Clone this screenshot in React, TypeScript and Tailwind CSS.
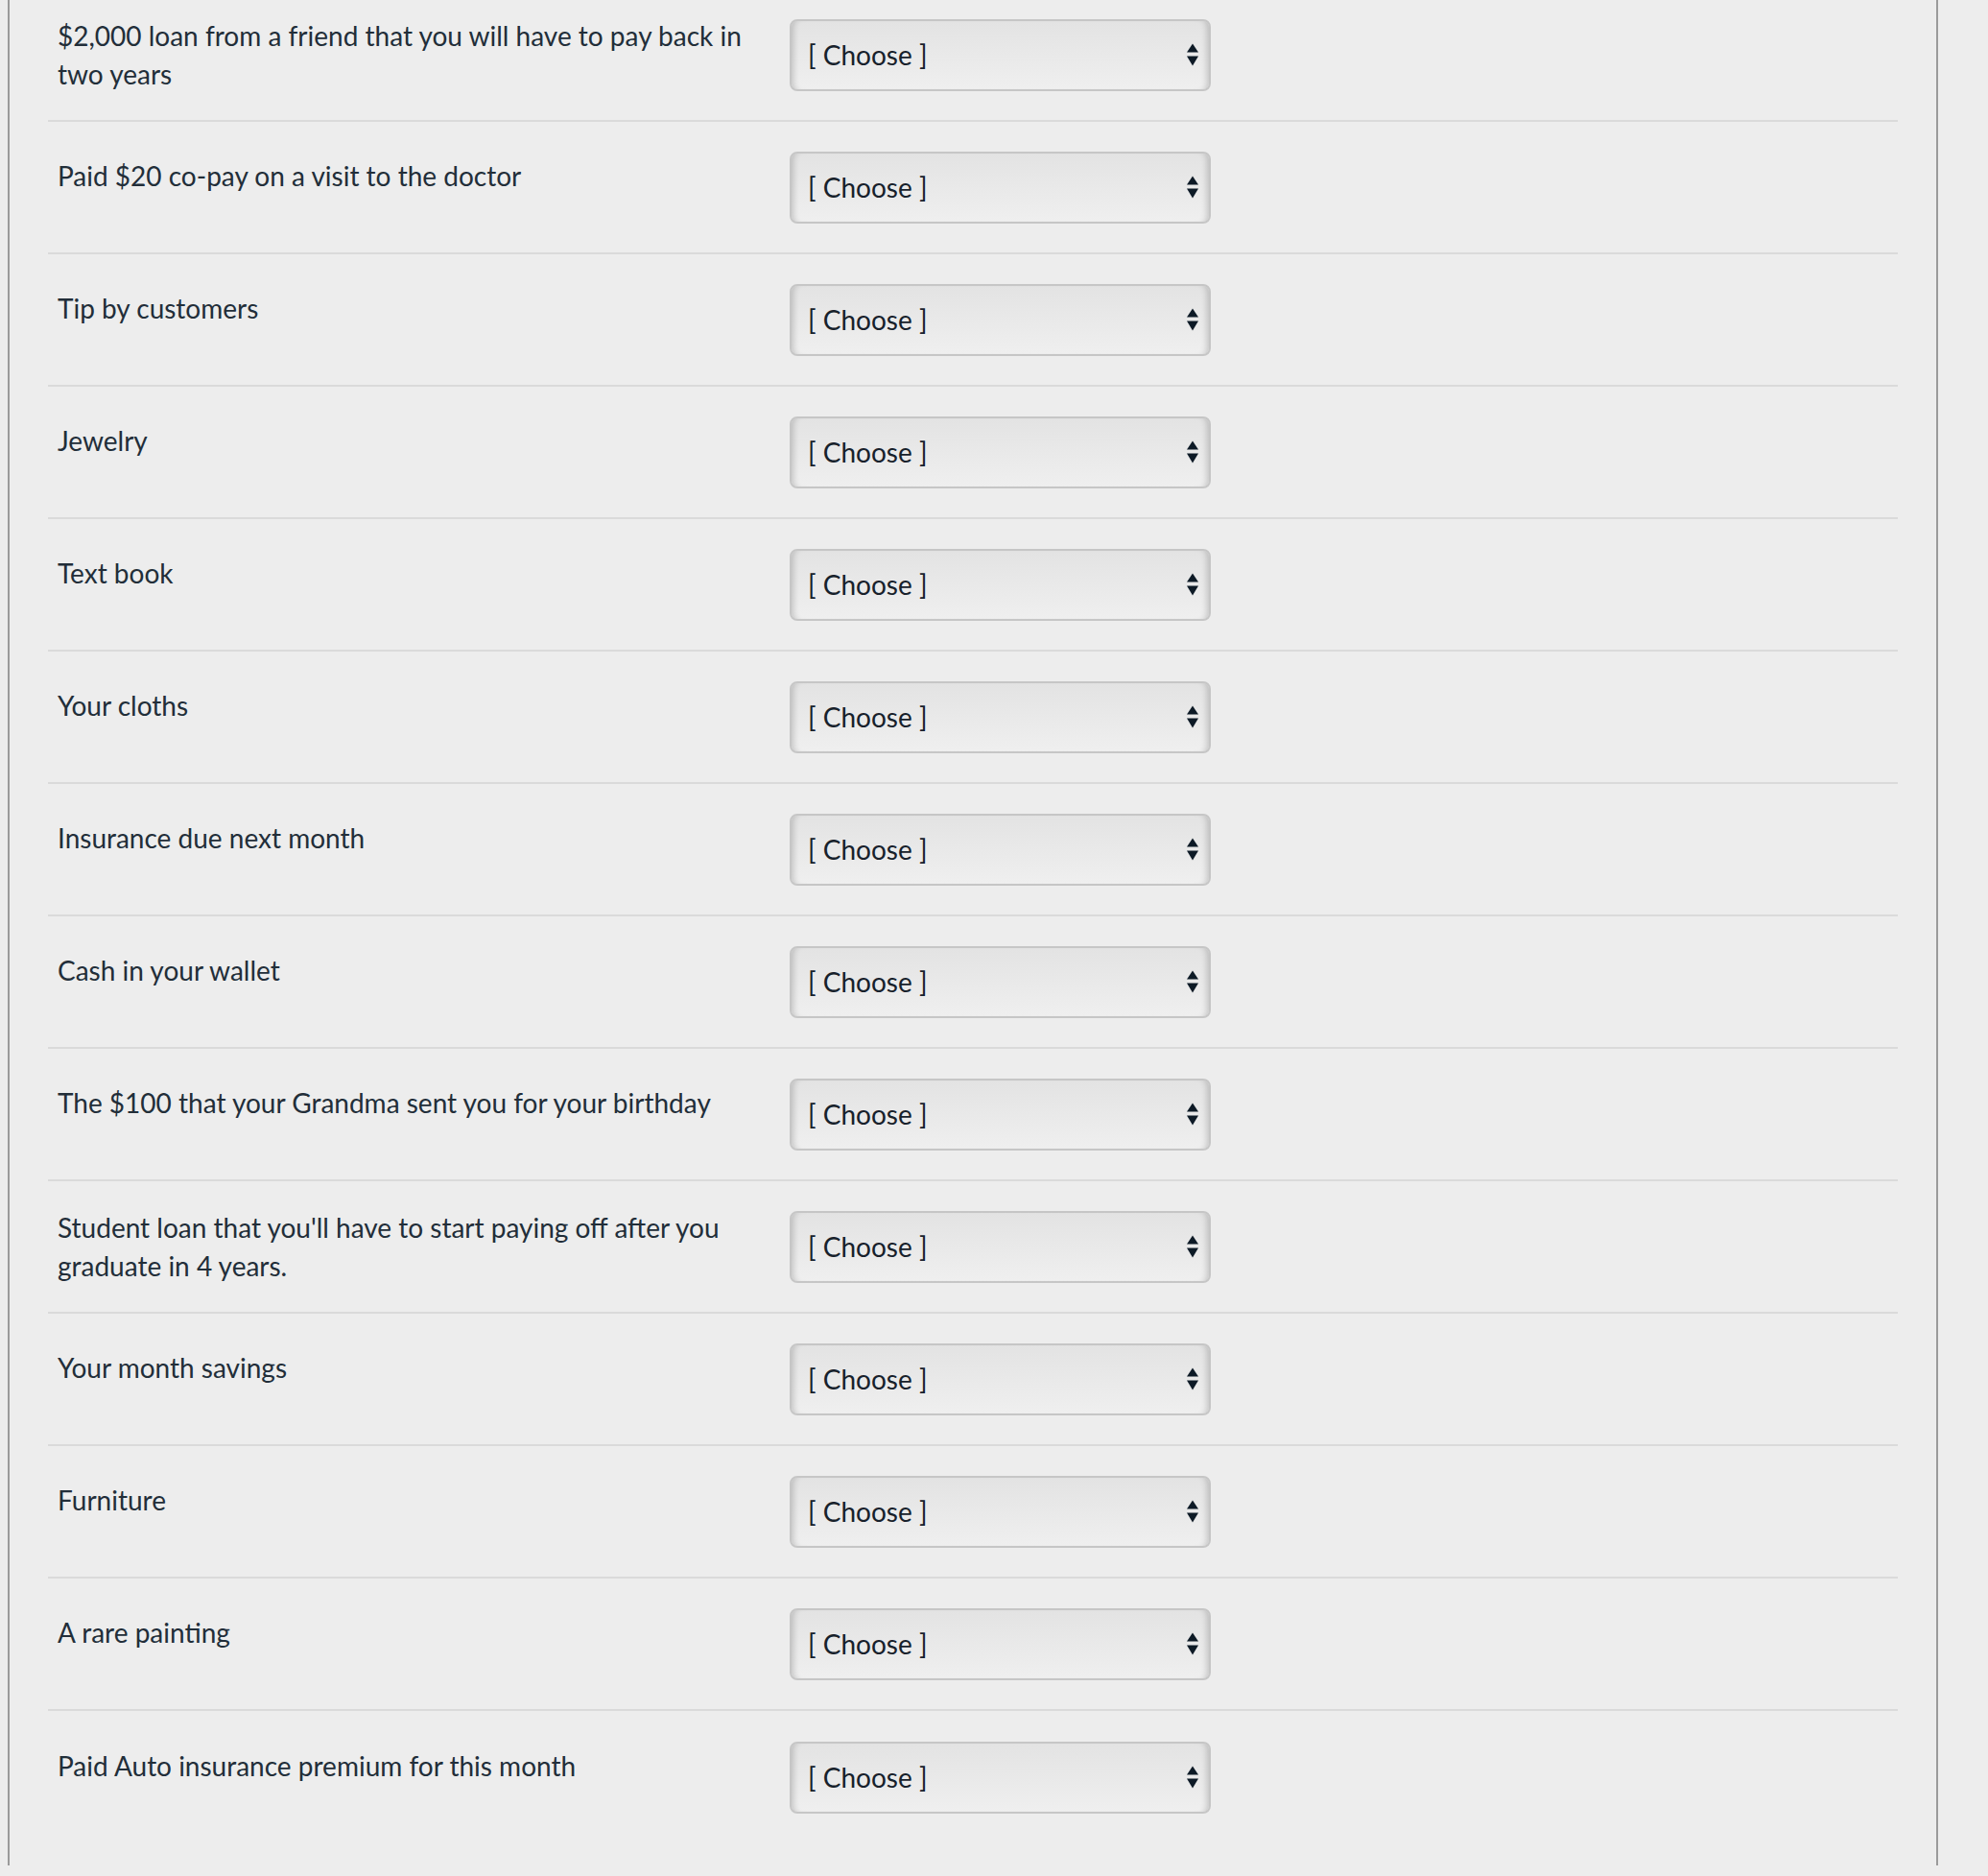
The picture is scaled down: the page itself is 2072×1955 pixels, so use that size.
const items = [
  '$2,000 loan from a friend that you will have to pay back in two years',
  'Paid $20 co-pay on a visit to the doctor',
  'Tip by customers',
  'Jewelry',
  'Text book',
  'Your cloths',
  'Insurance due next month',
  'Cash in your wallet',
  'The $100 that your Grandma sent you for your birthday',
  "Student loan that you'll have to start paying off after you graduate in 4 years.",
  'Your month savings',
  'Furniture',
  'A rare painting',
  'Paid Auto insurance premium for this month',
];

function SelectBox() {
  return (
    <div className="relative flex items-center w-[439px] h-[75px] shrink-0 rounded-[8px] border-2 border-[#c6c6c6] bg-linear-to-b from-[#e3e3e3] to-[#efefef] pl-[17px] shadow-[inset_7px_0_6px_-5px_rgba(0,0,0,0.18),inset_-7px_0_6px_-5px_rgba(0,0,0,0.18)]">
      <span className="text-[28px] leading-none text-[#17212b]">[ Choose ]</span>
      <svg
        className="absolute right-[10px] top-1/2 -translate-y-1/2"
        width="14"
        height="25"
        viewBox="0 0 14 25"
      >
        <path d="M7 1 L13 10 L1 10 Z" fill="#0d1a26" />
        <path d="M1 14 L13 14 L7 24 Z" fill="#0d1a26" />
      </svg>
    </div>
  );
}

export default function App() {
  return (
    <main className="h-[1955px] overflow-hidden bg-[#ededed] pl-[8px] font-['Lato','Liberation_Sans',sans-serif]">
      <div className="w-[2012px] h-full border-x-2 border-[#9b9b9b] px-[40px]">
        <div className="-mt-[11px]">
          {items.map((label, i) => (
            <div
              key={i}
              className="flex items-center h-[138px] border-b-2 border-[#dadada] last:border-b-0"
            >
              <div className="w-[773px] min-h-[64px] shrink-0 pl-[10px] pr-[23px] text-[28px] leading-[40px] text-[#222e39]">
                {label}
              </div>
              <SelectBox />
            </div>
          ))}
        </div>
      </div>
    </main>
  );
}
